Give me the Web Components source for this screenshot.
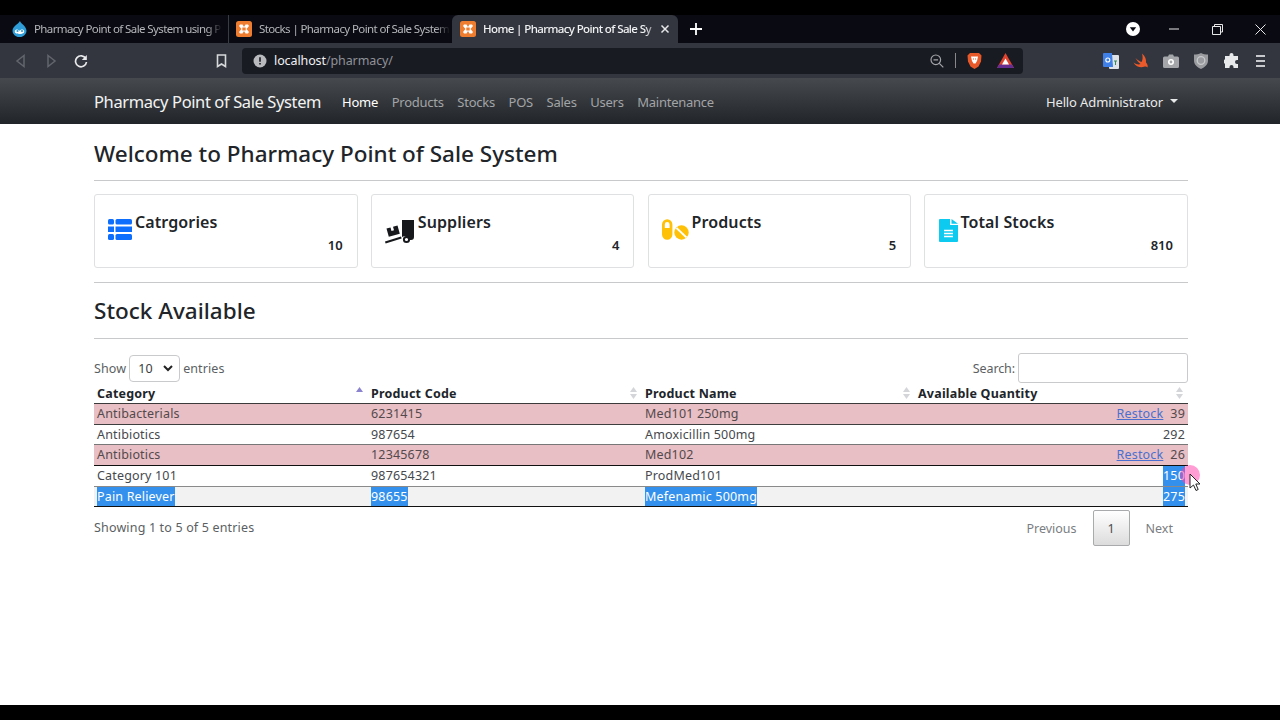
<!DOCTYPE html>
<html>
<head>
<meta charset="utf-8">
<title>Home | Pharmacy Point of Sale System</title>
<style>
  html, body { margin: 0; padding: 0; height: 100%; overflow: hidden; background: #fff; }
  body { font-family: "Noto Sans", "Open Sans", sans-serif; color: #212529; position: relative; }
  x-page { height: 720px; }
</style>
</head>
<body>
<x-page>
  <x-browser-chrome></x-browser-chrome>
  <x-navbar brand="Pharmacy Point of Sale System" user="Hello Administrator"></x-navbar>
  <x-content>
    <x-heading text="Welcome to Pharmacy Point of Sale System" style="height: 57px; padding-top: 2px"></x-heading>
    <x-stats>
      <x-stat-card label="Catrgories" value="10" gap="3">
        <svg slot="icon" width="24" height="21" viewBox="0 0 24 21"><g fill="#0d6efd"><rect x="0" y="0" width="6" height="5.500" rx="1.500"/><rect x="7.500" y="0" width="16.500" height="5.500" rx="1.500"/><rect x="0" y="7.500" width="6" height="5.500"/><rect x="7.500" y="7.500" width="16.500" height="5.500"/><rect x="0" y="15" width="6" height="6" rx="1.500"/><rect x="7.500" y="15" width="16.500" height="6" rx="1.500"/></g></svg>
      </x-stat-card>
      <x-stat-card label="Suppliers" value="4" gap="3">
        <svg slot="icon" width="30" height="25" viewBox="0 0 30 25"><g fill="#16181b"><path d="M17 1h12v17a3 3 0 0 1-3 3h-2a4.600 4.600 0 0 0-8-2l-.2-.2 1.200-.5z"/><path d="M0 22.500l16-5 .6 2-16 5z"/><circle cx="21.500" cy="20.500" r="2.600" fill="none" stroke="#16181b" stroke-width="2"/><path d="M1.500 9.500l4-1 1 3.500 2.500-.7-1-3.500 4.500-1.200 2.300 8.200-11 3z"/></g></svg>
      </x-stat-card>
      <x-stat-card label="Products" value="5" gap="3">
        <svg slot="icon" width="27" height="21" viewBox="0 0 27 21"><g fill="#ffc107"><path d="M0 5.500a5.200 5.200 0 0 1 10.400 0v10a5.200 5.200 0 0 1-10.400 0zM2.800 9h4.800v-3.500a2.400 2.400 0 0 0-4.800 0z"/><circle cx="19.500" cy="13.500" r="7.200"/></g><path d="M14.500 9l10 9.500" stroke="#fff" stroke-width="1.800"/></svg>
      </x-stat-card>
      <x-stat-card label="Total Stocks" value="810" gap="2">
        <svg slot="icon" width="19" height="23" viewBox="0 0 19 23" style="margin-left: 1px"><path d="M0 1a1 1 0 0 1 1-1h10v6h8v16a1 1 0 0 1-1 1H1a1 1 0 0 1-1-1z" fill="#0dcaf0"/><path d="M12.500 0L19 4.800h-6.500z" fill="#0dcaf0"/><path d="M5 11.500h9M5 14.500h9M5 17.500h9" stroke="#fff" stroke-width="1.500"/></svg>
      </x-stat-card>
    </x-stats>
    <x-heading text="Stock Available" style="padding-top: 0; padding-bottom: 1px"></x-heading>
    <x-stock-table>
      <x-stock-row category="Antibacterials" code="6231415" name="Med101 250mg" qty="39" low line="#3d3a3b"></x-stock-row>
      <x-stock-row category="Antibiotics" code="987654" name="Amoxicillin 500mg" qty="292" line="#3e3e3e"></x-stock-row>
      <x-stock-row category="Antibiotics" code="12345678" name="Med102" qty="26" low line="#777"></x-stock-row>
      <x-stock-row category="Category 101" code="987654321" name="ProdMed101" qty="150" line="#111" picked="qty"></x-stock-row>
      <x-stock-row category="Pain Reliever" code="98655" name="Mefenamic 500mg" qty="275" line="#8a8a8a" picked="all" shade></x-stock-row>
    </x-stock-table>
  </x-content>
</x-page>
<x-mouse-mark></x-mouse-mark>

<script>
class Page extends HTMLElement {
  constructor () {
    super()
    this.attachShadow({ mode: 'open' })
  }

  connectedCallback () {
    this.shadowRoot.innerHTML = /* html */`
      <style>
        :host {
          display: flex;
          flex-direction: column;
          border-top: 15px solid #000;
          border-bottom: 15px solid #000;
          box-sizing: border-box;
          background: #fff;
        }
      </style>
      <slot></slot>
    `
  }
}

class BrowserChrome extends HTMLElement {
  constructor () {
    super()
    this.attachShadow({ mode: 'open' })
  }

  connectedCallback () {
    const xampp = /* html */`
      <svg class="fav" width="16" height="16" viewBox="0 0 16 16">
        <rect width="16" height="16" rx="2.500" fill="#ef7d30"/>
        <path d="M4 3.500h2.500L8 6l1.500-2.500H12L13 5l-2.500 3 2.500 3-1 1.500H9.500L8 10l-1.500 2.500H4L3 11l2.500-3L3 5z" fill="#fff"/>
        <path d="M6.300 6.500h3.400v3H6.300z" fill="#ef7d30"/>
      </svg>`

    this.shadowRoot.innerHTML = /* html */`
      <style>
        :host { display: block; font-family: "Noto Sans", sans-serif; }
        .tabs {
          height: 28px;
          background: #0a0b12;
          display: flex;
          align-items: center;
        }
        .tab {
          box-sizing: border-box;
          height: 28px;
          display: flex;
          align-items: center;
          gap: 7px;
          padding-left: 12px;
          font-size: 11.500px;
          letter-spacing: -0.6px;
          color: #b4b6bb;
          white-space: nowrap;
          overflow: hidden;
        }
        .tab svg { flex: none; }
        .tab span {
          flex: 1;
          margin-top: -2px;
          -webkit-mask-image: linear-gradient(90deg, #000 92%, transparent);
        }
        .tab.one { width: 228px; padding-right: 6px; }
        .tab.two { width: 224px; border-left: 1px solid #3a3c44; padding-left: 7px; padding-right: 2px; }
        .tab.active {
          width: 226px;
          background: #33363f;
          color: #f1f2f3;
          border-radius: 6px 6px 0 0;
          padding-left: 8px;
          padding-right: 7px;
          font-weight: 500;
        }
        .tab .close { flex: none; margin-left: -7px; display: block; }
        .plus { width: 36px; display: flex; justify-content: center; }
        .spacer { flex: 1; }
        .winbtn { display: flex; align-items: center; }
        .winbtn svg { display: block; }
        .toolbar {
          height: 35px;
          background: #33363f;
          display: flex;
          align-items: center;
          box-sizing: border-box;
          padding-left: 12px;
        }
        .nav { display: flex; align-items: center; gap: 13px; }
        .nav .reload { margin-left: 2px; }
        .bookmark { margin-left: 128px; margin-right: 15px; display: flex; }
        .omni {
          width: 781px;
          height: 26px;
          box-sizing: border-box;
          background: #191b23;
          border-radius: 4px;
          display: flex;
          align-items: center;
          padding: 0 9px 0 11px;
          font-size: 12.500px;
          letter-spacing: -0.1px;
          color: #8f9298;
          gap: 7px;
        }
        .omni b { color: #f0f1f2; font-weight: 400; }
        .omni .url { flex: 1; }
        .omni .right { display: flex; align-items: center; gap: 11px; }
        .omni .bat { margin-left: 4px; }
        .sep { width: 1px; height: 15px; background: #888; }
        .ext {
          display: grid;
          grid-auto-flow: column;
          grid-auto-columns: 30px;
          justify-items: center;
          align-items: center;
          margin-left: 73px;
        }
      </style>
      <div class="tabs">
        <div class="tab one">
          <svg class="fav" width="15" height="16" viewBox="0 0 15 16">
            <path d="M8 0c.5 2.500 6.500 5 6.500 10a6.800 6 0 0 1-14 0C.5 5 6.500 3 8 0z" fill="#2f9ed8"/>
            <path d="M3 9.500c1.500-2 3-.8 4.500.2 1.500-1.200 3.500-2 4.500-.3 .8 1.800-.5 3.500-4.500 3.500S2.300 11.500 3 9.500z" fill="#fff"/>
            <circle cx="5.500" cy="10" r="1.100" fill="#2f9ed8"/><circle cx="10" cy="10" r="1.100" fill="#2f9ed8"/>
          </svg>
          <span>Pharmacy Point of Sale System using P</span>
        </div>
        <div class="tab two">${xampp}<span>Stocks | Pharmacy Point of Sale System</span></div>
        <div class="tab active">${xampp}<span>Home | Pharmacy Point of Sale Sy</span>
          <svg class="close" width="12" height="12" viewBox="0 0 12 12"><path d="M2.500 2.500l7 7M9.500 2.500l-7 7" stroke="#e6e7e9" stroke-width="1.500"/></svg>
        </div>
        <div class="plus">
          <svg width="12" height="12" viewBox="0 0 12 12"><path d="M6 0v12M0 6h12" stroke="#fff" stroke-width="1.800"/></svg>
        </div>
        <div class="spacer"></div>
        <div class="winbtn">
          <svg width="14" height="14" viewBox="0 0 14 14" style="margin-right:29px"><circle cx="7" cy="7" r="7" fill="#fff"/><path d="M3.800 5.200h6.400L7 9.500z" fill="#0a0b12"/></svg>
          <svg width="10" height="10" viewBox="0 0 10 10" style="margin-right:33px"><path d="M0 5h10" stroke="#e8e8e8"/></svg>
          <svg width="11" height="11" viewBox="0 0 11 11" style="margin-right:32px"><path d="M2.500 2.500V.5h8v7.500H8.500M.5 2.500h8v8h-8z" fill="none" stroke="#e8e8e8"/></svg>
          <svg width="11" height="11" viewBox="0 0 11 11" style="margin-right:14px"><path d="M.5.500l10 10M10.500.500l-10 10" stroke="#e8e8e8"/></svg>
        </div>
      </div>
      <div class="toolbar">
        <div class="nav">
          <svg width="17" height="14" viewBox="0 0 17 14"><path d="M12 1.500L5 7l7 5.500z" fill="none" stroke="#62656c" stroke-width="1.500"/></svg>
          <svg width="17" height="14" viewBox="0 0 17 14"><path d="M6 1.500L13 7l-7 5.500z" fill="none" stroke="#62656c" stroke-width="1.500"/></svg>
          <svg class="reload" width="14" height="14" viewBox="0 0 14 14"><path d="M11.800 4.500A5.500 5.500 0 1 0 12.500 8" fill="none" stroke="#e8e9ea" stroke-width="1.700"/><path d="M12.800 1v5h-5z" fill="#e8e9ea"/></svg>
        </div>
        <div class="bookmark"><svg width="11" height="14" viewBox="0 0 11 14"><path d="M1.500 1h8v11.500L5.500 10l-4 2.500z" fill="none" stroke="#d8d9db" stroke-width="1.600"/></svg></div>
        <div class="omni">
          <svg width="14" height="14" viewBox="0 0 14 14"><circle cx="7" cy="7" r="6.500" fill="#b8babd"/><path d="M7 3.200v4.500M7 9v1.600" stroke="#191b23" stroke-width="1.600"/></svg>
          <div class="url"><b>localhost</b>/pharmacy/</div>
          <div class="right">
            <svg width="14" height="14" viewBox="0 0 14 14"><circle cx="5.800" cy="5.800" r="4.800" fill="none" stroke="#a3a5a9" stroke-width="1.200"/><path d="M3.500 5.800h4.600M9.300 9.300l4 4" stroke="#a3a5a9" stroke-width="1.200"/></svg>
            <div class="sep"></div>
            <svg width="15" height="17" viewBox="0 0 15 17"><path d="M3 1h9l2.500 2.500-.5 6-2.500 5L7.500 17l-4-2.500-2.500-5-.5-6z" fill="#e8592a"/><path d="M4 4.500h7L10 9l-1.500 2.500H6.500L5 9z" fill="#fff"/><path d="M6 6.500h1v1H6zM8 6.500h1v1H8z" fill="#e8592a"/></svg>
            <svg class="bat" width="17" height="15" viewBox="0 0 17 15"><path d="M8.500 0L17 15H0z" fill="#e0442f"/><path d="M0 15h17l-2-3.500H2z" fill="#662d91"/><path d="M8.500 5.500L12 11.500H5z" fill="#fff"/></svg>
          </div>
        </div>
        <div class="ext">
          <svg width="16" height="16" viewBox="0 0 16 16"><rect x="6" y="2" width="10" height="14" rx="1" fill="#dfe3e8"/><path d="M1 0h8l1 14H1a1 1 0 0 1-1-1V1a1 1 0 0 1 1-1z" fill="#3f7fe8"/><circle cx="4.800" cy="7" r="2" fill="none" stroke="#fff" stroke-width="1.100"/><path d="M11 8h3M12.500 8v4" stroke="#3a8a5a" stroke-width="1"/></svg>
          <svg width="16" height="16" viewBox="0 0 16 16"><path d="M9 .5c3 2.500 4.500 6 4 9 1.500 1.500 2 3.500 1.500 5-1-1.200-2.200-1.200-3.500-.7C8 15 3 14 .5 9.500 3 11.500 6 12 7.500 11 5.500 9.500 3.500 7 2.500 5 4.500 7 7 8.500 8.500 9 9.800 7 10 4 9 .5z" fill="#ea5a2a"/></svg>
          <svg width="16" height="14" viewBox="0 0 16 14"><path d="M1.500 2.500H5L6 .5h4l1 2h3.500A1.500 1.500 0 0 1 16 4v8.500a1.500 1.500 0 0 1-1.500 1.500h-13A1.500 1.500 0 0 1 0 12.500V4a1.500 1.500 0 0 1 1.500-1.500z" fill="#a4a6a9"/><circle cx="8" cy="8" r="3" fill="#fff"/><circle cx="8" cy="8" r="1.400" fill="#a4a6a9"/></svg>
          <svg width="14" height="16" viewBox="0 0 14 16"><path d="M7 0c2 1.200 4.500 1.600 7 1.600v6c0 4-3 6.800-7 8.400C3 14.400 0 11.600 0 7.600v-6C2.500 1.600 5 1.200 7 0z" fill="#9a9ca0"/><circle cx="7" cy="7.500" r="3.800" fill="none" stroke="#c8cacc" stroke-width="1.300"/></svg>
          <svg width="15" height="15" viewBox="0 0 15 15"><path d="M5.500 2a2 2 0 0 1 4 0v1H14v4h-1a2 2 0 0 0 0 4h1v4H9.500v-1a2 2 0 0 0-4 0v1H1v-4.500a2 2 0 0 1 0-4V3h4.500z" fill="#e8e9ea"/></svg>
          <svg width="12" height="14" viewBox="0 0 12 14"><path d="M1 2h9M1 7h9M1 12h9" stroke="#c8c9cc" stroke-width="1.800"/></svg>
        </div>
      </div>
    `
  }
}

class Navbar extends HTMLElement {
  constructor () {
    super()
    this.attachShadow({ mode: 'open' })
  }

  connectedCallback () {
    const links = ['Products', 'Stocks', 'POS', 'Sales', 'Users', 'Maintenance']
    this.shadowRoot.innerHTML = /* html */`
      <style>
        :host {
          display: flex;
          align-items: center;
          box-sizing: border-box;
          height: 46px;
          padding: 1px 102px 0 94px;
          background: linear-gradient(180deg, #46494d 0%, #212529 100%);
          color: #fff;
          font-family: "Noto Sans", sans-serif;
        }
        .brand { font-size: 16.500px; letter-spacing: -0.39px; margin-right: 21px; color: #f2f3f3; white-space: nowrap; }
        nav { display: flex; gap: 13.600px; font-size: 13px; letter-spacing: -0.25px; color: #a2a4a7; flex: 1; }
        nav .on { color: #fff; }
        .user { font-size: 13px; letter-spacing: -0.12px; color: #e8e9e9; display: flex; align-items: center; gap: 7px; }
        .caret { width: 0; height: 0; border: 4px solid transparent; border-top-color: #e8e9e9; border-bottom: 0; margin-top: -1px; }
      </style>
      <div class="brand">${this.getAttribute('brand')}</div>
      <nav><span class="on">Home</span>${links.map(l => `<span>${l}</span>`).join('')}</nav>
      <div class="user">${this.getAttribute('user')}<span class="caret"></span></div>
    `
  }
}

class Content extends HTMLElement {
  constructor () {
    super()
    this.attachShadow({ mode: 'open' })
  }

  connectedCallback () {
    this.shadowRoot.innerHTML = /* html */`
      <style>
        :host { display: block; padding: 0 92px 0 94px; flex: 1; }
      </style>
      <slot></slot>
    `
  }
}

class Heading extends HTMLElement {
  constructor () {
    super()
    this.attachShadow({ mode: 'open' })
  }

  connectedCallback () {
    this.shadowRoot.innerHTML = /* html */`
      <style>
        :host {
          display: flex;
          align-items: center;
          height: 56px;
          box-sizing: border-box;
          border-bottom: 1px solid #c8c9ca;
          font-family: "Noto Sans", sans-serif;
          font-size: 22.500px;
          font-weight: 500;
          color: #212529;
          padding-top: 3px;
        }
      </style>
      ${this.getAttribute('text')}
    `
  }
}

class Stats extends HTMLElement {
  constructor () {
    super()
    this.attachShadow({ mode: 'open' })
  }

  connectedCallback () {
    this.shadowRoot.innerHTML = /* html */`
      <style>
        :host {
          display: grid;
          grid-template-columns: repeat(4, 1fr);
          gap: 13.200px;
          padding: 13px 0 14px;
          border-bottom: 1px solid #c8c9ca;
        }
      </style>
      <slot></slot>
    `
  }
}

class StatCard extends HTMLElement {
  constructor () {
    super()
    this.attachShadow({ mode: 'open' })
  }

  connectedCallback () {
    this.shadowRoot.innerHTML = /* html */`
      <style>
        :host {
          display: block;
          box-sizing: border-box;
          height: 74px;
          border: 1px solid #dfe0e1;
          border-radius: 3px;
          padding: 14px 14px 0 13px;
          font-family: "Noto Sans", sans-serif;
          color: #212529;
        }
        .head { display: flex; align-items: flex-start; gap: ${this.getAttribute('gap')}px; }
        .icon { display: flex; margin-top: 10px; height: 25px; align-items: flex-start; }
        .label { font-size: 16px; font-weight: 600; letter-spacing: 0.1px; line-height: 26px; }
        .value { font-size: 13px; font-weight: 600; text-align: right; line-height: 16px; margin-top: -7px; }
      </style>
      <div class="head">
        <div class="icon"><slot name="icon"></slot></div>
        <div class="label">${this.getAttribute('label')}</div>
      </div>
      <div class="value">${this.getAttribute('value')}</div>
    `
  }
}

class StockTable extends HTMLElement {
  constructor () {
    super()
    this.attachShadow({ mode: 'open' })
  }

  connectedCallback () {
    const heads = ['Category', 'Product Code', 'Product Name', 'Available Quantity']
    const arrows = on => /* html */`
      <svg class="sort" width="7" height="12" viewBox="0 0 7 12">
        <path d="M3.500 0L7 5H0z" fill="${on ? '#8b83cf' : '#d4d5d8'}"/>
        ${on ? '' : '<path d="M3.500 12L7 7H0z" fill="#d4d5d8"/>'}
      </svg>`

    this.shadowRoot.innerHTML = /* html */`
      <style>
        :host {
          display: block;
          font-family: "Noto Sans", sans-serif;
          font-size: 12.500px;
          color: #5b5f63;
        }
        .top {
          display: flex;
          justify-content: space-between;
          align-items: center;
          height: 28px;
          margin-top: 15px;
        }
        .show, .search { display: flex; align-items: center; gap: 3px; letter-spacing: -0.1px; }
        .show { letter-spacing: 0.1px; }
        .pick {
          width: 51px;
          height: 27px;
          box-sizing: border-box;
          border: 1px solid #c9cacc;
          border-radius: 4px;
          background: #fff;
          display: flex;
          align-items: center;
          justify-content: space-between;
          padding: 0 6px 0 8px;
          color: #3a3d41;
        }
        .box {
          width: 170px;
          height: 30px;
          box-sizing: border-box;
          border: 1px solid #c9cacc;
          border-radius: 3px;
        }
        .head {
          display: grid;
          grid-template-columns: 274px 274px 273px 1fr;
          height: 20px;
          margin-top: 1px;
          align-items: center;
          font-weight: 700;
          color: #212529;
          letter-spacing: 0.2px;
        }
        .head div {
          display: flex;
          justify-content: space-between;
          align-items: center;
          padding: 0 5px 0 3px;
        }
        .foot {
          display: flex;
          justify-content: space-between;
          align-items: center;
          box-sizing: border-box;
          height: 42.500px;
          border-top: 1.500px solid #111;
          letter-spacing: 0.16px;
        }
        .foot .info { margin-top: -2px; }
        .pages { display: flex; align-items: center; color: #7a7d81; letter-spacing: 0; }
        .pages span { padding: 0 16px; }
        .pages span:last-child { padding-right: 15px; }
        .pages .cur {
          box-sizing: border-box;
          width: 37px;
          height: 36px;
          padding: 0;
          display: flex;
          align-items: center;
          justify-content: center;
          border: 1px solid #a9aaab;
          border-radius: 2px;
          background: linear-gradient(180deg, #fff 0%, #dcdcdc 100%);
          color: #4a4d50;
        }
      </style>
      <div class="top">
        <div class="show">
          Show
          <div class="pick">10
            <svg width="10" height="7" viewBox="0 0 10 7"><path d="M1 1l4 4 4-4" fill="none" stroke="#222" stroke-width="2"/></svg>
          </div>
          entries
        </div>
        <div class="search">Search:<div class="box"></div></div>
      </div>
      <div class="head">
        ${heads.map((h, i) => `<div>${h}${arrows(i === 0)}</div>`).join('')}
      </div>
      <slot></slot>
      <div class="foot">
        <div class="info">Showing 1 to 5 of 5 entries</div>
        <div class="pages"><span>Previous</span><span class="cur">1</span><span>Next</span></div>
      </div>
    `
  }
}

class StockRow extends HTMLElement {
  constructor () {
    super()
    this.attachShadow({ mode: 'open' })
  }

  connectedCallback () {
    const low = this.hasAttribute('low')
    const picked = this.getAttribute('picked')
    const bg = low ? '#e7bfc4' : this.hasAttribute('shade') ? '#f2f2f2' : '#fff'
    const cell = t => picked === 'all' ? `<mark>${t}</mark>` : t
    const qty = picked ? `<mark>${this.getAttribute('qty')}</mark>` : this.getAttribute('qty')

    this.shadowRoot.innerHTML = /* html */`
      <style>
        :host {
          display: grid;
          grid-template-columns: 274px 274px 273px 1fr;
          height: 20.700px;
          box-sizing: border-box;
          border-top: 1px solid ${this.getAttribute('line')};
          background: ${bg};
          color: ${low ? '#54494c' : '#45494d'};
          font-size: 12.500px;
          letter-spacing: 0.17px;
          line-height: 19.700px;
        }
        div { padding: 0 3px; white-space: nowrap; }
        .qty { text-align: right; }
        a { color: #4a6fd0; text-decoration: underline; margin-right: 7px; }
        mark { background: #3390ec; color: #fff; display: inline-block; height: 19.700px; }
      </style>
      <div>${cell(this.getAttribute('category'))}</div>
      <div>${cell(this.getAttribute('code'))}</div>
      <div>${cell(this.getAttribute('name'))}</div>
      <div class="qty">${low ? '<a>Restock</a>' : ''}${qty}</div>
    `
  }
}

// pointer highlight from the screen recorder, lies over the table
class MouseMark extends HTMLElement {
  constructor () {
    super()
    this.attachShadow({ mode: 'open' })
  }

  connectedCallback () {
    this.shadowRoot.innerHTML = /* html */`
      <style>
        :host { position: absolute; left: 1180px; top: 465px; width: 24px; height: 30px; }
        .dot { position: absolute; left: 0; top: 0; width: 20px; height: 20px; border-radius: 50%; background: rgba(255, 60, 170, .5); }
        svg { position: absolute; left: 9px; top: 8px; }
      </style>
      <div class="dot"></div>
      <svg width="12" height="19" viewBox="0 0 12 19"><path d="M1 1v14l3.500-3 2.500 5.500 2.200-1L6.800 11H11z" fill="#fff" stroke="#222" stroke-width="1"/></svg>
    `
  }
}

customElements.define('x-page', Page)
customElements.define('x-browser-chrome', BrowserChrome)
customElements.define('x-navbar', Navbar)
customElements.define('x-content', Content)
customElements.define('x-heading', Heading)
customElements.define('x-stats', Stats)
customElements.define('x-stat-card', StatCard)
customElements.define('x-stock-table', StockTable)
customElements.define('x-stock-row', StockRow)
customElements.define('x-mouse-mark', MouseMark)
</script>
</body>
</html>
